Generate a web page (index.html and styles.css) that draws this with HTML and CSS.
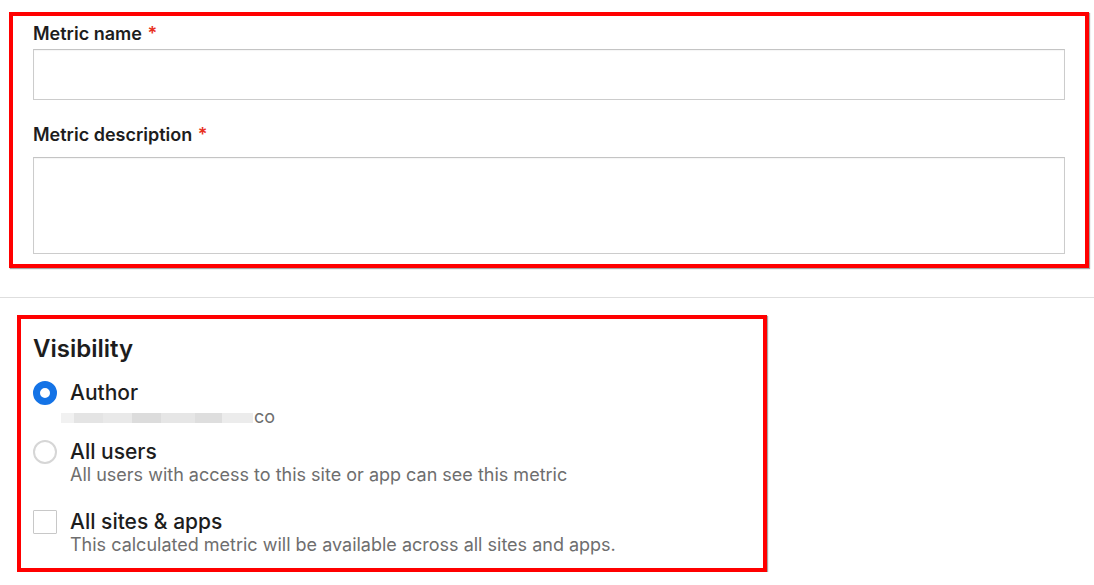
FILE: index.html
```html
<!DOCTYPE html>
<html lang="en">
<head>
    <meta charset="UTF-8">
    <title>Metric</title>
    <link rel="stylesheet" href="styles.css">
</head>
<body>
    <div class="fields marked">
        <label class="field-label" for="metric-name">Metric name <span class="req">*</span></label>
        <input class="text-input" id="metric-name" type="text">

        <label class="field-label label-desc" for="metric-desc">Metric description <span class="req">*</span></label>
        <textarea class="text-area" id="metric-desc"></textarea>
    </div>

    <hr class="divider">

    <div class="visibility marked">
        <h2 class="vis-title">Visibility</h2>

        <div class="option option-author">
            <span class="radio checked"></span>
            <div class="option-text">
                <div class="option-name">Author</div>
                <div class="option-desc"><span class="redacted"></span>co</div>
            </div>
        </div>

        <div class="option">
            <span class="radio"></span>
            <div class="option-text">
                <div class="option-name">All users</div>
                <div class="option-desc">All users with access to this site or app can see this metric</div>
            </div>
        </div>

        <div class="option option-sites">
            <span class="checkbox"></span>
            <div class="option-text">
                <div class="option-name">All sites &amp; apps</div>
                <div class="option-desc">This calculated metric will be available across all sites and apps.</div>
            </div>
        </div>
    </div>
</body>
</html>
```

FILE: styles.css
```css
body {
    margin: 0;
    padding: 0;
    background: #fff;
    font-family: Inter, "Noto Sans", Arial, sans-serif;
    color: #1f1f1f;
}

/* red annotation frames */
.marked {
    border: 4px solid #ff0000;
    box-shadow: 1px 1px 1px rgba(0, 0, 0, 0.35);
}

.fields {
    margin: 12px 5px 0 9px;
    padding: 7px 20px 10px 20px;
}

.field-label {
    display: block;
    font-size: 18px;
    line-height: 22px;
    font-weight: 600;
    color: #1d1d1d;
    margin-bottom: 4px;
}

.label-desc {
    margin-top: 24px;
    margin-bottom: 11px;
}

.req {
    color: #e8301e;
    margin-left: 1px;
}

.text-input,
.text-area {
    display: block;
    width: 100%;
    box-sizing: border-box;
    border: 1px solid #cccccc;
    border-top-color: #c4c4c4;
    box-shadow: inset 0 1px 1px rgba(0, 0, 0, 0.04);
    background: #fff;
    margin: 0;
    font: inherit;
    resize: none;
}

.text-input {
    height: 51px;
}

.text-area {
    height: 97px;
}

.divider {
    border: none;
    border-top: 1px solid #dedede;
    margin: 29px 0 17px 0;
}

.visibility {
    margin-left: 17px;
    padding: 16px 12px 11px 12px;
    box-sizing: border-box;
    width: 750px;
}

.vis-title {
    margin: 0 0 17px 0;
    font-size: 24px;
    line-height: 28px;
    font-weight: 600;
    color: #1d1d1d;
}

.option {
    display: flex;
    align-items: flex-start;
    gap: 13px;
}

.option + .option {
    margin-top: 10px;
}

.option-sites {
    margin-top: 22px !important;
}

.option-name {
    font-size: 21px;
    line-height: 22px;
    padding-top: 2px;
    font-weight: 500;
    color: #1d1d1d;
}

.option-desc {
    font-size: 18px;
    line-height: 24px;
    color: #6e6e6e;
}

.option-author .option-desc {
    margin-top: 1px;
}

.radio {
    width: 24px;
    height: 24px;
    margin-top: 1px;
    box-sizing: border-box;
    border-radius: 50%;
    border: 2px solid #d6d6d6;
    background: #fff;
    flex: none;
}

.radio.checked {
    border: 7px solid #1473e6;
}

.checkbox {
    width: 24px;
    height: 24px;
    margin-top: 1px;
    box-sizing: border-box;
    border: 1px solid #c8c8c8;
    border-radius: 1px;
    flex: none;
}

/* blurred e-mail in the original capture */
.redacted {
    display: inline-block;
    width: 192px;
    height: 10px;
    margin-left: -9px;
    margin-right: 1px;
    background: linear-gradient(90deg,
        #f1f1f1 0%, #f1f1f1 7%,
        #e4e4e4 7%, #e4e4e4 22%,
        #e9e9e9 22%, #e9e9e9 37%,
        #dcdcdc 37%, #dcdcdc 52%,
        #e6e6e6 52%, #e6e6e6 70%,
        #dedede 70%, #dedede 84%,
        #ececec 84%, #ececec 100%);
}
```
